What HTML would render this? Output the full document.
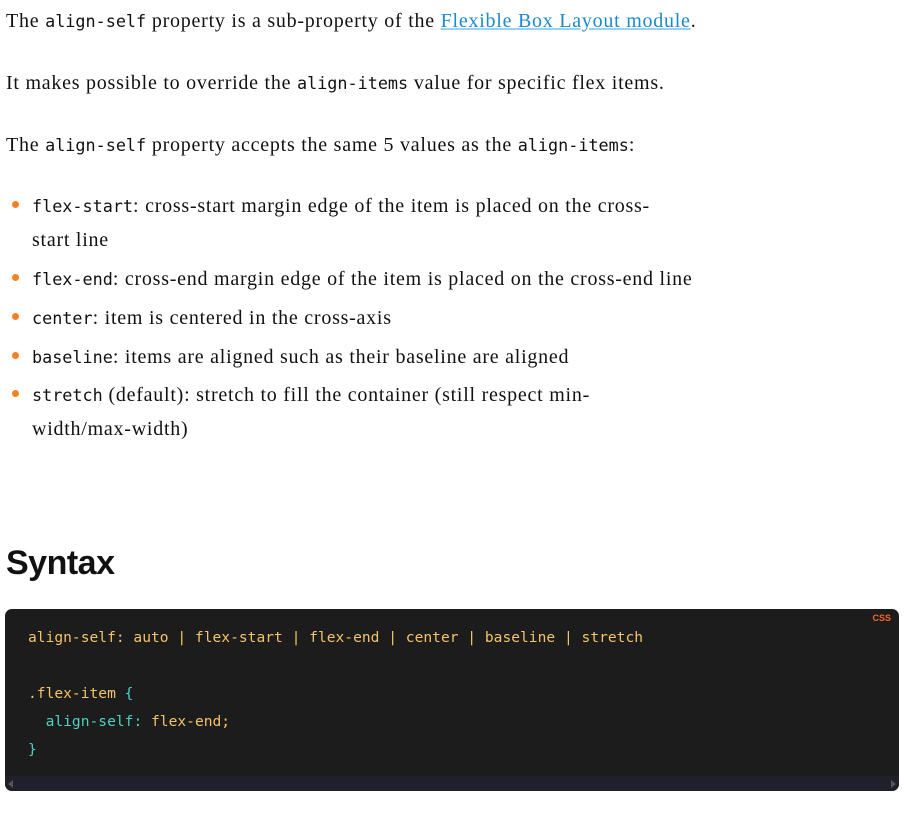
<!DOCTYPE html>
<html><head><meta charset="utf-8"><style>
body{margin:0;background:#fff;color:#111;font-family:"Liberation Serif",serif;font-size:20px;letter-spacing:0.75px;}
.w{position:relative;width:905px;height:816px;}
.l{position:absolute;left:6px;white-space:nowrap;line-height:34px;}
code{font-family:"DejaVu Sans Mono","Liberation Mono",monospace;font-size:16.8px;letter-spacing:0;}
a{color:#1a8ac9;text-decoration:underline;text-decoration-color:#9bd0ee;}
.b{position:absolute;left:12px;width:7px;height:7px;border-radius:50%;background:#f58220;}
.li{left:32px;}
h2{position:absolute;left:6px;top:541px;margin:0;font-family:"Liberation Sans",sans-serif;font-weight:bold;font-size:34px;letter-spacing:-0.5px;line-height:44px;}
.cb{position:absolute;left:5px;top:609px;width:894px;height:182px;background:#1c1c1c;border-radius:7px;overflow:hidden;letter-spacing:0;}
.cl{position:absolute;left:23px;font-family:"DejaVu Sans Mono",monospace;font-size:14.6px;line-height:28px;white-space:pre;color:#f4c468;}
.t{color:#4fd1c5}
.sb{position:absolute;left:0;bottom:0;width:894px;height:15px;background:#201f2c;}
</style></head><body><div class="w">
<div class="l" style="top:4px">The <code>align-self</code> property is a sub-property of the <a>Flexible Box Layout module</a>.</div>
<div class="l" style="top:66px">It makes possible to override the <code>align-items</code> value for specific flex items.</div>
<div class="l" style="top:128px">The <code>align-self</code> property accepts the same 5 values as the <code>align-items</code>:</div>
<div class="b" style="top:201px"></div>
<div class="l li" style="top:189px"><code>flex-start</code>: cross-start margin edge of the item is placed on the cross-<br>start line</div>
<div class="b" style="top:274px"></div>
<div class="l li" style="top:262px"><code>flex-end</code>: cross-end margin edge of the item is placed on the cross-end line</div>
<div class="b" style="top:313px"></div>
<div class="l li" style="top:301px"><code>center</code>: item is centered in the cross-axis</div>
<div class="b" style="top:352px"></div>
<div class="l li" style="top:340px"><code>baseline</code>: items are aligned such as their baseline are aligned</div>
<div class="b" style="top:390px"></div>
<div class="l li" style="top:378px"><code>stretch</code> (default): stretch to fill the container (still respect min-<br>width/max-width)</div>
<h2>Syntax</h2>
<div class="cb">
<div style="position:absolute;right:8px;top:4px;color:#f26b21;font-family:'Liberation Sans',sans-serif;font-weight:bold;font-size:9px">CSS</div>
<div class="cl" style="top:15px">align-self: auto | flex-start | flex-end | center | baseline | stretch</div>
<div class="cl" style="top:71px">.flex-item <span class="t">{</span></div>
<div class="cl" style="top:99px">  <span class="t">align-self:</span> flex-end;</div>
<div class="cl t" style="top:127px">}</div>
<div class="sb"><span style="position:absolute;left:3px;top:4px;border-right:5px solid #555;border-top:4px solid transparent;border-bottom:4px solid transparent"></span><span style="position:absolute;right:3px;top:4px;border-left:5px solid #555;border-top:4px solid transparent;border-bottom:4px solid transparent"></span></div>
</div>
</div></body></html>
